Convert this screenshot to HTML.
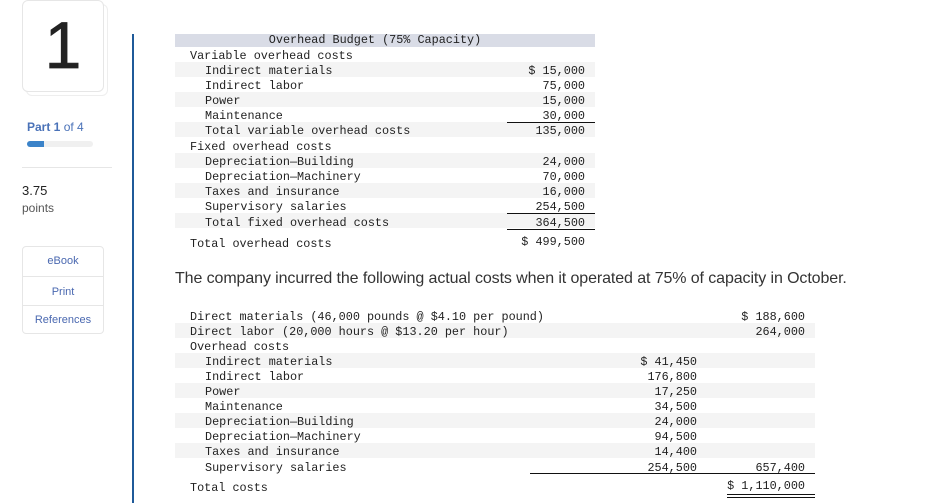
<!DOCTYPE html>
<html><head><meta charset="utf-8"><style>
*{margin:0;padding:0;box-sizing:border-box}
body{width:947px;height:503px;background:#fff;position:relative;overflow:hidden;font-family:"Liberation Sans",sans-serif;color:#333}
.a{position:absolute}
.m{font-family:"Liberation Mono","DejaVu Sans Mono",monospace;font-size:11.8px;color:#222;white-space:pre;line-height:15px}
.t{margin-top:2px}
.s{position:absolute;background:#f4f4f4;height:15px}
.r{text-align:right}
.ln{position:absolute;height:1px;background:#111}
</style></head><body>
<!-- sidebar -->
<div class="a" style="left:26px;top:4px;width:82px;height:92px;border:1px solid #eee;border-radius:6px;background:#fff"></div>
<div class="a" style="left:22px;top:0;width:82px;height:92px;border:1px solid #e6e6e6;border-radius:6px;background:#fff"></div>
<div class="a" style="left:22px;top:7px;width:82px;text-align:center;font-size:66px;line-height:76px;color:#222;-webkit-text-stroke:0.7px #222">1</div>
<div class="a" style="left:132px;top:34px;width:2px;height:469px;background:#1f5a99"></div>
<div class="a" style="left:27px;top:120px;font-size:12px;color:#4a72b8"><b>Part 1</b> of 4</div>
<div class="a" style="left:27px;top:141px;width:66px;height:6px;border-radius:3px;background:#f0f0f0"></div>
<div class="a" style="left:27px;top:141px;width:17px;height:6px;border-radius:3px 0 0 3px;background:#3b83c9"></div>
<div class="a" style="left:22px;top:167px;width:90px;height:1px;background:#e6e6e6"></div>
<div class="a" style="left:22px;top:183px;font-size:13px;color:#222">3.75</div>
<div class="a" style="left:22px;top:201px;font-size:12px;color:#555">points</div>
<div class="a" style="left:22px;top:246px;width:82px;height:88px;border:1px solid #e6e6e6;border-radius:4px"></div>
<div class="a" style="left:23px;top:276px;width:80px;height:1px;background:#e6e6e6"></div>
<div class="a" style="left:23px;top:305px;width:80px;height:1px;background:#e6e6e6"></div>
<div class="a" style="left:22px;top:255px;width:82px;text-align:center;font-size:11px;color:#4a68b0">eBook</div>
<div class="a" style="left:22px;top:286px;width:82px;text-align:center;font-size:11px;color:#4a68b0">Print</div>
<div class="a" style="left:22px;top:314px;width:82px;text-align:center;font-size:11px;color:#4a68b0">References</div>

<!-- table 1 -->
<div class="a" style="left:175px;top:34px;width:420px;height:13px;background:#d9dce6"></div>
<div class="a m" style="left:175px;top:33px;width:420px;text-align:center"><span style="position:relative;left:-10px">Overhead Budget (75% Capacity)</span></div>
<div class="s" style="left:175px;top:62px;width:420px"></div>
<div class="s" style="left:175px;top:92px;width:420px"></div>
<div class="s" style="left:175px;top:122px;width:420px"></div>
<div class="s" style="left:175px;top:153px;width:420px"></div>
<div class="s" style="left:175px;top:183px;width:420px"></div>
<div class="s" style="left:175px;top:213px;width:420px"></div>
<div class="a m t" style="left:190px;top:47px">Variable overhead costs</div>
<div class="a m t" style="left:205px;top:62px">Indirect materials
Indirect labor
Power
Maintenance
Total variable overhead costs</div>
<div class="a m t" style="left:190px;top:138px">Fixed overhead costs</div>
<div class="a m t" style="left:205px;top:153px">Depreciation—Building
Depreciation—Machinery
Taxes and insurance
Supervisory salaries</div>
<div class="a m t" style="left:205px;top:214px">Total fixed overhead costs</div>
<div class="a m t" style="left:190px;top:235px">Total overhead costs</div>
<div class="a m r t" style="left:485px;width:100px;top:62px">$ 15,000
75,000
15,000
30,000
135,000</div>
<div class="a m r t" style="left:485px;width:100px;top:153px">24,000
70,000
16,000
254,500</div>
<div class="a m r t" style="left:485px;width:100px;top:214px">364,500</div>
<div class="a m r t" style="left:485px;width:100px;top:233px">$ 499,500</div>
<div class="ln" style="left:507px;top:122px;width:88px"></div>
<div class="ln" style="left:507px;top:213px;width:88px"></div>
<div class="ln" style="left:507px;top:229px;width:88px"></div>

<div class="a" style="left:175px;top:270px;font-size:16px;color:#333;letter-spacing:-0.1px;white-space:nowrap">The company incurred the following actual costs when it operated at 75% of capacity in October.</div>

<!-- table 2 -->
<div class="s" style="left:175px;top:323px;width:640px"></div>
<div class="s" style="left:175px;top:353px;width:640px"></div>
<div class="s" style="left:175px;top:383px;width:640px"></div>
<div class="s" style="left:175px;top:413px;width:640px"></div>
<div class="s" style="left:175px;top:443px;width:640px"></div>
<div class="a m t" style="left:190px;top:308px">Direct materials (46,000 pounds @ $4.10 per pound)
Direct labor (20,000 hours @ $13.20 per hour)
Overhead costs</div>
<div class="a m t" style="left:205px;top:353px">Indirect materials
Indirect labor
Power
Maintenance
Depreciation—Building
Depreciation—Machinery
Taxes and insurance</div>
<div class="a m t" style="left:205px;top:459px">Supervisory salaries</div>
<div class="a m t" style="left:190px;top:479px">Total costs</div>
<div class="a m r t" style="left:597px;width:100px;top:353px">$ 41,450
176,800
17,250
34,500
24,000
94,500
14,400</div>
<div class="a m r t" style="left:597px;width:100px;top:459px">254,500</div>
<div class="a m r t" style="left:705px;width:100px;top:308px">$ 188,600
264,000</div>
<div class="a m r t" style="left:705px;width:100px;top:459px">657,400</div>
<div class="a m r" style="left:705px;width:100px;top:479px">$ 1,110,000</div>
<div class="ln" style="left:530px;top:473px;width:285px"></div>
<div class="ln" style="left:727px;top:494px;width:88px"></div>
<div class="ln" style="left:727px;top:497px;width:88px"></div>
</body></html>
